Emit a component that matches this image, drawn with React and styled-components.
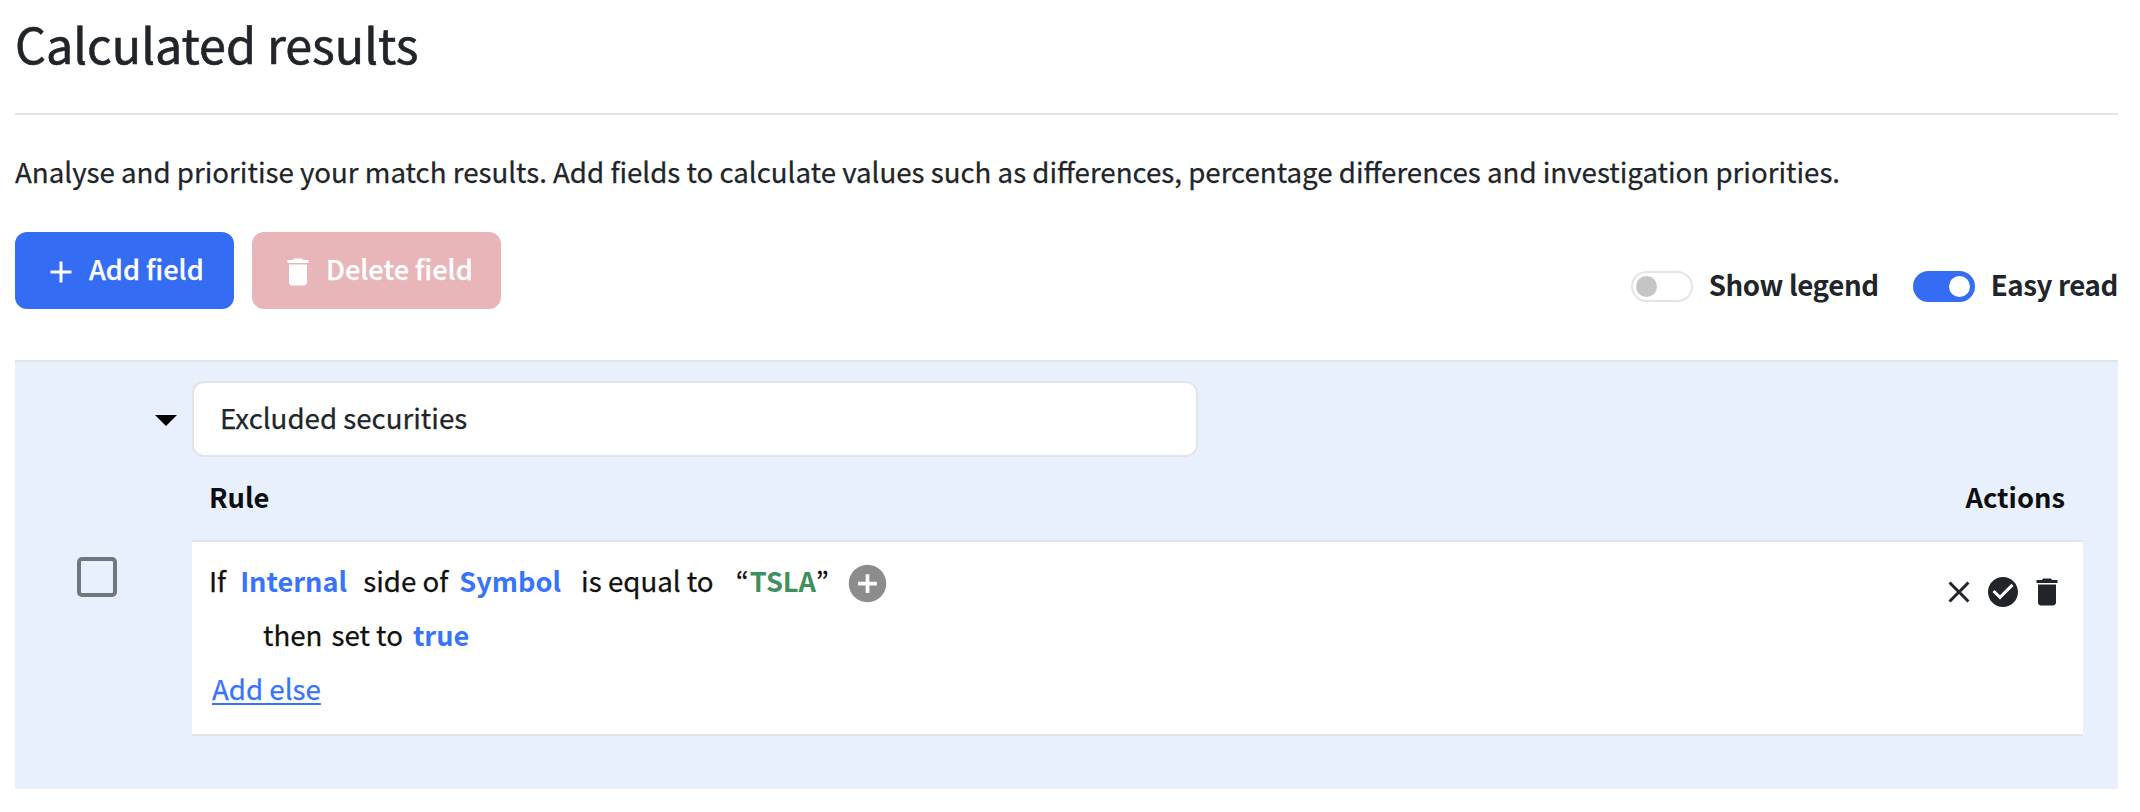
import React from "react";
import styled, { createGlobalStyle, ThemeProvider } from "styled-components";
import { MdAdd, MdAddCircle, MdCheckCircle, MdClose, MdDelete } from "react-icons/md";

const theme = {
    primary: "#346df4",
    link: "#3874fb",
    danger: "#e8b5b9",
    value: "#40905f",
    text: "#212529",
    border: "#e1e5e9",
    panel: "#e8effd",
    muted: "#8c8c8c",
};

const GlobalStyle = createGlobalStyle`
    * {
        box-sizing: border-box;
    }

    body {
        margin: 0;
        background-color: #fff;
        color: ${(props) => props.theme.text};
        font-family: "Noto Sans CJK KR", "Noto Sans", sans-serif;
        font-size: 27.7px;
        line-height: 40px;
        -webkit-text-stroke-width: 0.25px;
    }
`;

const StyledPage = styled.main`
    padding: 0 22px 23px 15px;
`;

const StyledTitle = styled.h1`
    height: 115px;
    margin: 0;
    padding-top: 3px;
    border-bottom: 2px solid ${(props) => props.theme.border};
    font-size: 48.5px;
    font-weight: 400;
    line-height: 80px;
    -webkit-text-stroke-width: 0.6px;
`;

const StyledDescription = styled.p`
    margin: 36px 0 0;
    font-size: 27.68px;
    white-space: nowrap;
`;

const StyledToolbar = styled.div`
    display: flex;
    justify-content: space-between;
    align-items: flex-end;
    margin: 41px 0 51px;
`;

const StyledButtons = styled.div`
    display: flex;
    gap: 18px;
`;

const StyledButton = styled.button`
    display: flex;
    align-items: center;
    gap: 10px;
    width: ${(props) => props.$width}px;
    height: 77px;
    padding: 0 0 0 28px;
    border: 0;
    border-radius: 12px;
    background-color: ${(props) => props.theme[props.$color]};
    color: #fff;
    font-family: inherit;
    font-size: 27.1px;
    font-weight: 500;
    line-height: 40px;
    white-space: nowrap;

    svg {
        flex: none;
        margin-top: 3px;
    }

    span {
        margin-bottom: 4px;
    }
`;

const StyledToggles = styled.div`
    display: flex;
    gap: 34px;
    margin-bottom: 7px;
`;

const StyledToggle = styled.label`
    display: flex;
    align-items: center;
    gap: 16px;
    height: 31px;
    font-weight: 700;
    letter-spacing: -0.4px;
    -webkit-text-stroke-width: 0;

    span {
        margin-bottom: 6px;
    }
`;

const StyledSwitch = styled.i`
    display: flex;
    align-items: center;
    justify-content: ${(props) => (props.$on ? "flex-end" : "flex-start")};
    width: 62px;
    height: 31px;
    padding: 0 3px;
    border: 2px solid ${(props) => (props.$on ? props.theme.primary : props.theme.border)};
    border-radius: 16px;
    background-color: ${(props) => (props.$on ? props.theme.primary : "#fff")};

    &::before {
        content: "";
        width: 21px;
        height: 21px;
        border-radius: 50%;
        background-color: ${(props) => (props.$on ? "#fff" : "#c5c5c5")};
    }
`;

const StyledPanel = styled.section`
    display: grid;
    grid-template-columns: 140px 37px 1fr;
    height: 429px;
    padding-right: 35px;
    border-top: 2px solid ${(props) => props.theme.border};
    background-color: ${(props) => props.theme.panel};
`;

const StyledCheckbox = styled.span`
    align-self: center;
    width: 40px;
    height: 40px;
    margin: 3px 0 0 62px;
    border: 4px solid #6f777f;
    border-radius: 5px;
`;

const StyledCaret = styled.svg`
    width: 22px;
    height: 11px;
    margin-top: 53px;
`;

const StyledField = styled.div`
    padding-top: 19px;
`;

const StyledInput = styled.div`
    width: 1006px;
    height: 76px;
    padding: 14px 26px;
    border: 2px solid ${(props) => props.theme.border};
    border-radius: 12px;
    background-color: #fff;
`;

const StyledTableHead = styled.div`
    display: flex;
    justify-content: space-between;
    height: 83px;
    padding: 19px 18px 0 17px;
    color: #0c0e10;
    font-size: 27.3px;
    font-weight: 700;
    -webkit-text-stroke-width: 0;
`;

const StyledRuleRow = styled.div`
    display: flex;
    justify-content: space-between;
    padding: 11px 18px 19px 17px;
    border: solid ${(props) => props.theme.border};
    border-width: 2px 0;
    background-color: #fff;
    color: #101010;
`;

const StyledLine = styled.div`
    display: flex;
    align-items: center;
    height: 54px;
    padding-left: ${(props) => props.$indent || 0}px;
    white-space: nowrap;
`;

const StyledWord = styled.span`
    margin-left: ${(props) => props.$gap || 0}px;
`;

const StyledToken = styled(StyledWord)`
    color: ${(props) => props.theme[props.$color || "link"]};
    font-size: 27.2px;
    font-weight: 700;
    -webkit-text-stroke-width: 0;
`;

const StyledAddCondition = styled(MdAddCircle)`
    margin: 7px 0 0 16px;
    color: ${(props) => props.theme.muted};
`;

const StyledLink = styled.a`
    margin-left: 3px;
    color: ${(props) => props.theme.link};
    text-decoration: underline;
    text-decoration-thickness: 2px;
    text-underline-offset: 3px;
`;

const StyledActions = styled.div`
    display: flex;
    gap: 8px;
    padding-top: 21px;
    color: ${(props) => props.theme.text};
`;

const Toggle = (props) => (
    <StyledToggle>
        <StyledSwitch $on={props.on} />
        <span>{props.label}</span>
    </StyledToggle>
);

const Rule = () => (
    <StyledRuleRow>
        <div>
            <StyledLine>
                <StyledWord>If</StyledWord>
                <StyledToken $gap={14}>Internal</StyledToken>
                <StyledWord $gap={16}>side of</StyledWord>
                <StyledToken $gap={11}>Symbol</StyledToken>
                <StyledWord $gap={20}>is equal to</StyledWord>
                <StyledWord $gap={22}>“</StyledWord>
                <StyledToken $gap={1} $color="value">TSLA</StyledToken>
                <StyledWord>”</StyledWord>
                <StyledAddCondition size={45} />
            </StyledLine>
            <StyledLine $indent={54}>
                <StyledWord>then</StyledWord>
                <StyledWord $gap={9}>set to</StyledWord>
                <StyledToken $gap={10}>true</StyledToken>
            </StyledLine>
            <StyledLine>
                <StyledLink>Add else</StyledLink>
            </StyledLine>
        </div>
        <StyledActions>
            <MdClose size={36} />
            <MdCheckCircle size={36} />
            <MdDelete size={36} />
        </StyledActions>
    </StyledRuleRow>
);

const App = () => (
    <ThemeProvider theme={theme}>
        <GlobalStyle />
        <StyledPage>
            <StyledTitle>Calculated results</StyledTitle>
            <StyledDescription>
                Analyse and prioritise your match results. Add fields to calculate values such as
                differences, percentage differences and investigation priorities.
            </StyledDescription>
            <StyledToolbar>
                <StyledButtons>
                    <StyledButton $width={219} $color="primary">
                        <MdAdd size={36} />
                        <span>Add field</span>
                    </StyledButton>
                    <StyledButton $width={249} $color="danger">
                        <MdDelete size={36} />
                        <span>Delete field</span>
                    </StyledButton>
                </StyledButtons>
                <StyledToggles>
                    <Toggle label="Show legend" />
                    <Toggle label="Easy read" on />
                </StyledToggles>
            </StyledToolbar>
            <StyledPanel>
                <StyledCheckbox />
                <StyledCaret viewBox="0 0 22 11">
                    <path d="M0 0h22L11 11z" />
                </StyledCaret>
                <StyledField>
                    <StyledInput>Excluded securities</StyledInput>
                    <StyledTableHead>
                        <span>Rule</span>
                        <span>Actions</span>
                    </StyledTableHead>
                    <Rule />
                </StyledField>
            </StyledPanel>
        </StyledPage>
    </ThemeProvider>
);

export default App;
